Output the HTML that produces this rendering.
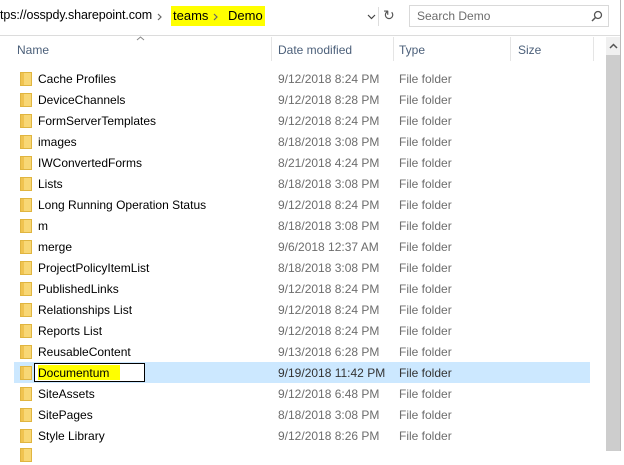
<!DOCTYPE html>
<html><head><style>
body{margin:0;width:624px;height:451px;overflow:hidden;background:#fff;font-family:"Liberation Sans",sans-serif;font-size:12px;color:#000;position:relative}
.a{position:absolute}
.row{position:absolute;left:14px;width:576px;height:21px}
.row .ic{position:absolute;left:6px;top:4px;width:12px;height:14px;background:#f8d775;border:1px solid #e0b540;box-sizing:border-box}
.row .ic:before{content:"";position:absolute;left:0;top:0;width:3px;height:12px;background:#f0c350}
.row span{position:absolute;top:4px}
.n{left:24px}.d{left:264px;color:#6d6d6d}.t{left:385px;color:#6d6d6d}
.h{position:absolute;top:43px;color:#4c607a}
.div{position:absolute;top:37px;width:1px;height:24px;background:#e5e5e5}
</style></head><body>
<div class="a" style="left:0;top:8px;font-size:12.5px;letter-spacing:-0.1px;color:#000">tps://osspdy.sharepoint.com</div>
<svg class="a" style="left:157px;top:13px" width="6" height="8"><path d="M1 1L4 4L1 7" fill="none" stroke="#666" stroke-width="1.2"/></svg>
<div class="a" style="left:171px;top:6px;width:94px;height:20px;background:#ffff00"></div>
<div class="a" style="left:173px;top:8px;font-size:13px">teams</div>
<svg class="a" style="left:213px;top:13px" width="6" height="8"><path d="M1 1L4 4L1 7" fill="none" stroke="#666" stroke-width="1.2"/></svg>
<div class="a" style="left:228px;top:8px;font-size:13px">Demo</div>
<svg class="a" style="left:367px;top:14px" width="9" height="6"><path d="M1 1L4.5 4.5L8 1" fill="none" stroke="#444" stroke-width="1.2"/></svg>
<div class="a" style="left:378px;top:7px;width:1px;height:19px;background:#ddd"></div>
<div class="a" style="left:383px;top:7px;font-size:14px;color:#555">↻</div>
<div class="a" style="left:409px;top:5px;width:200px;height:22px;border:1px solid #d9d9d9;box-sizing:border-box"></div>
<div class="a" style="left:417px;top:9px;font-size:12px;color:#6d6d6d">Search Demo</div>
<svg class="a" style="left:591px;top:10px" width="12" height="12"><circle cx="7" cy="5" r="3.5" fill="none" stroke="#555" stroke-width="1.3"/><line x1="4.5" y1="7.5" x2="1" y2="11" stroke="#555" stroke-width="1.5"/></svg>
<div class="a" style="left:0;top:35px;width:621px;height:1px;background:#dcdcdc"></div>
<div class="a" style="left:620px;top:0;width:1px;height:451px;background:#bbb"></div>
<svg class="a" style="left:136px;top:36px" width="9" height="5"><path d="M1 4L4.5 1L8 4" fill="none" stroke="#888" stroke-width="1"/></svg>
<span class="h" style="left:17px">Name</span>
<span class="h" style="left:278px">Date modified</span>
<span class="h" style="left:399px">Type</span>
<span class="h" style="left:518px">Size</span>
<div class="div" style="left:271px"></div><div class="div" style="left:393px"></div><div class="div" style="left:510px"></div><div class="div" style="left:593px"></div>
<div class="a" style="left:606px;top:37px;width:14px;height:414px;background:#f0f0f0"></div>
<div class="a" style="left:606px;top:55px;width:14px;height:396px;background:#cdcdcd"></div>
<svg class="a" style="left:609px;top:43px" width="9" height="6"><path d="M1 5L4.5 1.5L8 5" fill="none" stroke="#555" stroke-width="1.5"/></svg>
<div class="row" style="top:68px"><div class="ic"></div><span class="n">Cache Profiles</span><span class="d">9/12/2018 8:24 PM</span><span class="t">File folder</span></div>
<div class="row" style="top:89px"><div class="ic"></div><span class="n">DeviceChannels</span><span class="d">9/12/2018 8:28 PM</span><span class="t">File folder</span></div>
<div class="row" style="top:110px"><div class="ic"></div><span class="n">FormServerTemplates</span><span class="d">9/12/2018 8:24 PM</span><span class="t">File folder</span></div>
<div class="row" style="top:131px"><div class="ic"></div><span class="n">images</span><span class="d">8/18/2018 3:08 PM</span><span class="t">File folder</span></div>
<div class="row" style="top:152px"><div class="ic"></div><span class="n">IWConvertedForms</span><span class="d">8/21/2018 4:24 PM</span><span class="t">File folder</span></div>
<div class="row" style="top:173px"><div class="ic"></div><span class="n">Lists</span><span class="d">8/18/2018 3:08 PM</span><span class="t">File folder</span></div>
<div class="row" style="top:194px"><div class="ic"></div><span class="n">Long Running Operation Status</span><span class="d">9/12/2018 8:24 PM</span><span class="t">File folder</span></div>
<div class="row" style="top:215px"><div class="ic"></div><span class="n">m</span><span class="d">8/18/2018 3:08 PM</span><span class="t">File folder</span></div>
<div class="row" style="top:236px"><div class="ic"></div><span class="n">merge</span><span class="d">9/6/2018 12:37 AM</span><span class="t">File folder</span></div>
<div class="row" style="top:257px"><div class="ic"></div><span class="n">ProjectPolicyItemList</span><span class="d">8/18/2018 3:08 PM</span><span class="t">File folder</span></div>
<div class="row" style="top:278px"><div class="ic"></div><span class="n">PublishedLinks</span><span class="d">9/12/2018 8:24 PM</span><span class="t">File folder</span></div>
<div class="row" style="top:299px"><div class="ic"></div><span class="n">Relationships List</span><span class="d">9/12/2018 8:24 PM</span><span class="t">File folder</span></div>
<div class="row" style="top:320px"><div class="ic"></div><span class="n">Reports List</span><span class="d">9/12/2018 8:24 PM</span><span class="t">File folder</span></div>
<div class="row" style="top:341px"><div class="ic"></div><span class="n">ReusableContent</span><span class="d">9/13/2018 6:28 PM</span><span class="t">File folder</span></div>
<div class="row" style="top:362px;background:#cce8ff"><div class="ic"></div>
<div class="a" style="left:20px;top:1px;width:111px;height:19px;background:#fff;border:1px solid #000;box-sizing:border-box"></div>
<div class="a" style="left:24px;top:3px;width:82px;height:15px;background:#ffff00"></div>
<span class="n">Documentum</span><span class="d" style="color:#333">9/19/2018 11:42 PM</span><span class="t" style="color:#333">File folder</span></div>
<div class="row" style="top:383px"><div class="ic"></div><span class="n">SiteAssets</span><span class="d">9/12/2018 6:48 PM</span><span class="t">File folder</span></div>
<div class="row" style="top:404px"><div class="ic"></div><span class="n">SitePages</span><span class="d">8/18/2018 3:08 PM</span><span class="t">File folder</span></div>
<div class="row" style="top:425px"><div class="ic"></div><span class="n">Style Library</span><span class="d">9/12/2018 8:26 PM</span><span class="t">File folder</span></div>
<div class="row" style="top:444px"><div class="ic"></div></div>
</body></html>
